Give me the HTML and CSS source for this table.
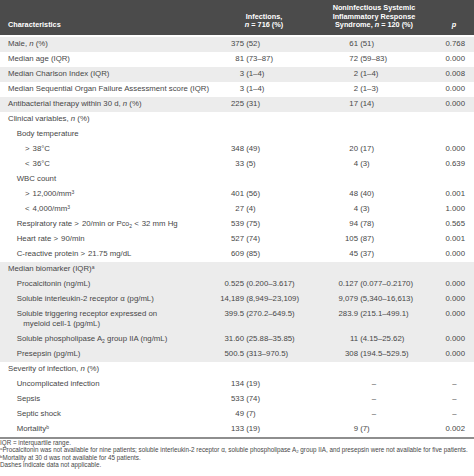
FILE: index.html
```html
<!DOCTYPE html>
<html lang="en">
<head>
<meta charset="utf-8">
<title>Characteristics table</title>
<link rel="stylesheet" href="styles.css">
</head>
<body>
<table class="tbl">
  <colgroup>
    <col class="w-label">
    <col class="w-inf">
    <col class="w-sirs">
    <col class="w-p">
  </colgroup>
  <thead>
    <tr>
      <th class="h-label">Characteristics</th>
      <th class="h-mid">Infections,<br><i>n</i> = 716 (%)</th>
      <th class="h-mid">Noninfectious Systemic<br>Inflammatory Response<br>Syndrome, <i>n</i> = 120 (%)</th>
      <th class="h-p"><i>p</i></th>
    </tr>
  </thead>
  <tbody>
    <tr class="shade">
      <td class="lab">Male, <i>n</i> (%)</td>
      <td class="v1"><span class="n">375</span> (52)</td>
      <td class="v2"><span class="n">61</span> (51)</td>
      <td class="pv">0.768</td>
    </tr>
    <tr>
      <td class="lab">Median age (IQR)</td>
      <td class="v1"><span class="n">81</span> (73–87)</td>
      <td class="v2"><span class="n">72</span> (59–83)</td>
      <td class="pv">0.000</td>
    </tr>
    <tr class="shade">
      <td class="lab">Median Charlson Index (IQR)</td>
      <td class="v1"><span class="n">3</span> (1–4)</td>
      <td class="v2"><span class="n">2</span> (1–4)</td>
      <td class="pv">0.008</td>
    </tr>
    <tr>
      <td class="lab">Median Sequential Organ Failure Assessment score (IQR)</td>
      <td class="v1"><span class="n">3</span> (1–4)</td>
      <td class="v2"><span class="n">2</span> (1–3)</td>
      <td class="pv">0.000</td>
    </tr>
    <tr class="shade">
      <td class="lab">Antibacterial therapy within 30 d, <i>n</i> (%)</td>
      <td class="v1"><span class="n">225</span> (31)</td>
      <td class="v2"><span class="n">17</span> (14)</td>
      <td class="pv">0.000</td>
    </tr>
  </tbody>
  <tbody>
    <tr>
      <td class="lab">Clinical variables, <i>n</i> (%)</td>
      <td></td><td></td><td></td>
    </tr>
    <tr>
      <td class="lab l1">Body temperature</td>
      <td></td><td></td><td></td>
    </tr>
    <tr>
      <td class="lab l2"><span class="op">&gt;</span>38°C</td>
      <td class="v1"><span class="n">348</span> (49)</td>
      <td class="v2"><span class="n">20</span> (17)</td>
      <td class="pv">0.000</td>
    </tr>
    <tr>
      <td class="lab l2"><span class="op">&lt;</span>36°C</td>
      <td class="v1"><span class="n">33</span> (5)</td>
      <td class="v2"><span class="n">4</span> (3)</td>
      <td class="pv">0.639</td>
    </tr>
    <tr>
      <td class="lab l1">WBC count</td>
      <td></td><td></td><td></td>
    </tr>
    <tr>
      <td class="lab l2"><span class="op">&gt;</span>12,000/mm<sup>3</sup></td>
      <td class="v1"><span class="n">401</span> (56)</td>
      <td class="v2"><span class="n">48</span> (40)</td>
      <td class="pv">0.001</td>
    </tr>
    <tr>
      <td class="lab l2"><span class="op">&lt;</span>4,000/mm<sup>3</sup></td>
      <td class="v1"><span class="n">27</span> (4)</td>
      <td class="v2"><span class="n">4</span> (3)</td>
      <td class="pv">1.000</td>
    </tr>
    <tr>
      <td class="lab l1">Respiratory rate <span class="op">&gt;</span>20/min or P<span class="sc">co</span><sub>2</sub> <span class="op">&lt;</span>32 mm Hg</td>
      <td class="v1"><span class="n">539</span> (75)</td>
      <td class="v2"><span class="n">94</span> (78)</td>
      <td class="pv">0.565</td>
    </tr>
    <tr>
      <td class="lab l1">Heart rate <span class="op">&gt;</span>90/min</td>
      <td class="v1"><span class="n">527</span> (74)</td>
      <td class="v2"><span class="n">105</span> (87)</td>
      <td class="pv">0.001</td>
    </tr>
    <tr>
      <td class="lab l1">C-reactive protein <span class="op">&gt;</span>21.75 mg/dL</td>
      <td class="v1"><span class="n">609</span> (85)</td>
      <td class="v2"><span class="n">45</span> (37)</td>
      <td class="pv">0.000</td>
    </tr>
  </tbody>
  <tbody class="group-shade">
    <tr>
      <td class="lab">Median biomarker (IQR)<sup>a</sup></td>
      <td></td><td></td><td></td>
    </tr>
    <tr>
      <td class="lab l1">Procalcitonin (ng/mL)</td>
      <td class="v1"><span class="n">0.525</span> (0.200–3.617)</td>
      <td class="v2"><span class="n">0.127</span> (0.077–0.2170)</td>
      <td class="pv">0.000</td>
    </tr>
    <tr>
      <td class="lab l1">Soluble interleukin-2 receptor α (pg/mL)</td>
      <td class="v1"><span class="n">14,189</span> (8,949–23,109)</td>
      <td class="v2"><span class="n">9,079</span> (5,340–16,613)</td>
      <td class="pv">0.000</td>
    </tr>
    <tr>
      <td class="lab l1 hang">Soluble triggering receptor expressed on<br>myeloid cell-1 (pg/mL)</td>
      <td class="v1"><span class="n">399.5</span> (270.2–649.5)</td>
      <td class="v2"><span class="n">283.9</span> (215.1–499.1)</td>
      <td class="pv">0.000</td>
    </tr>
    <tr>
      <td class="lab l1">Soluble phospholipase A<sub>2</sub> group IIA (ng/mL)</td>
      <td class="v1"><span class="n">31.60</span> (25.88–35.85)</td>
      <td class="v2"><span class="n">11</span> (4.15–25.62)</td>
      <td class="pv">0.000</td>
    </tr>
    <tr>
      <td class="lab l1">Presepsin (pg/mL)</td>
      <td class="v1"><span class="n">500.5</span> (313–970.5)</td>
      <td class="v2"><span class="n">308</span> (194.5–529.5)</td>
      <td class="pv">0.000</td>
    </tr>
  </tbody>
  <tbody class="group-last">
    <tr>
      <td class="lab">Severity of infection, <i>n</i> (%)</td>
      <td></td><td></td><td></td>
    </tr>
    <tr>
      <td class="lab l1">Uncomplicated infection</td>
      <td class="v1"><span class="n">134</span> (19)</td>
      <td class="dash">–</td>
      <td class="pv"><span class="pd">–</span></td>
    </tr>
    <tr>
      <td class="lab l1">Sepsis</td>
      <td class="v1"><span class="n">533</span> (74)</td>
      <td class="dash">–</td>
      <td class="pv"><span class="pd">–</span></td>
    </tr>
    <tr>
      <td class="lab l1">Septic shock</td>
      <td class="v1"><span class="n">49</span> (7)</td>
      <td class="dash">–</td>
      <td class="pv"><span class="pd">–</span></td>
    </tr>
    <tr>
      <td class="lab l1">Mortality<sup>b</sup></td>
      <td class="v1"><span class="n">133</span> (19)</td>
      <td class="v2"><span class="n">9</span> (7)</td>
      <td class="pv">0.002</td>
    </tr>
  </tbody>
</table>
<div class="notes">
  <p>IQR = interquartile range.</p>
  <p><sup>a</sup>Procalcitonin was not available for nine patients; soluble interleukin-2 receptor α, soluble phospholipase A<sub>2</sub> group IIA, and presepsin were not available for five patients.</p>
  <p><sup>b</sup>Mortality at 30 d was not available for 45 patients.</p>
  <p>Dashes indicate data not applicable.</p>
</div>
</body>
</html>
```

FILE: styles.css
```css
html, body {
  margin: 0;
  padding: 0;
  background: #ffffff;
}

body {
  font-family: "Liberation Sans", Arial, Helvetica, sans-serif;
  color: #474747;
  width: 474px;
  overflow: hidden;
}

.tbl {
  width: 474px;
  border-collapse: collapse;
  table-layout: fixed;
  font-size: 7.8px;
  line-height: 10px;
}

.w-label { width: 212px; }
.w-inf { width: 104px; }
.w-sirs { width: 116px; }
.w-p { width: 42px; }

thead th {
  background: #4b4b4b;
  color: #ffffff;
  font-weight: bold;
  font-size: 7.3px;
  line-height: 8.5px;
  vertical-align: bottom;
  padding: 4px 0 5px;
  border-bottom: 2.5px solid #ffffff;
}

.h-label {
  text-align: left;
  padding-left: 8px;
}

.h-mid {
  text-align: center;
}

.h-p {
  text-align: center;
  padding-left: 2px;
}

td {
  padding: 2.5px 0;
  vertical-align: top;
  white-space: nowrap;
}

.shade td,
.group-shade td {
  background: #ececec;
}

.group-last tr:last-child td {
  border-bottom: 2px solid #8e8e8e;
}

.lab { padding-left: 8px; }
.l1 { padding-left: 16.7px; }
.l2 { padding-left: 25px; }

.hang {
  padding-left: 23.3px;
  text-indent: -6.6px;
}

.op {
  margin-right: 3px;
}

.sc {
  font-size: 7px;
}

sup, sub {
  font-size: 5px;
  line-height: 0;
}

sup { vertical-align: 2.5px; }
sub { vertical-align: -1.5px; }

.n {
  display: inline-block;
  text-align: right;
}

.v1 .n { width: 32px; }
.v2 .n { width: 42px; }

.dash {
  text-align: center;
}

.pv {
  text-align: right;
  padding-right: 9px;
}

.pd {
  display: inline-block;
  width: 21px;
  text-align: center;
}

.notes {
  font-size: 6.3px;
  line-height: 7.5px;
  color: #474747;
}

.notes p {
  margin: 0;
  white-space: nowrap;
}

.notes sup {
  font-size: 4.3px;
  vertical-align: 2px;
}

.notes sub {
  font-size: 4.3px;
  vertical-align: -1px;
}
```
